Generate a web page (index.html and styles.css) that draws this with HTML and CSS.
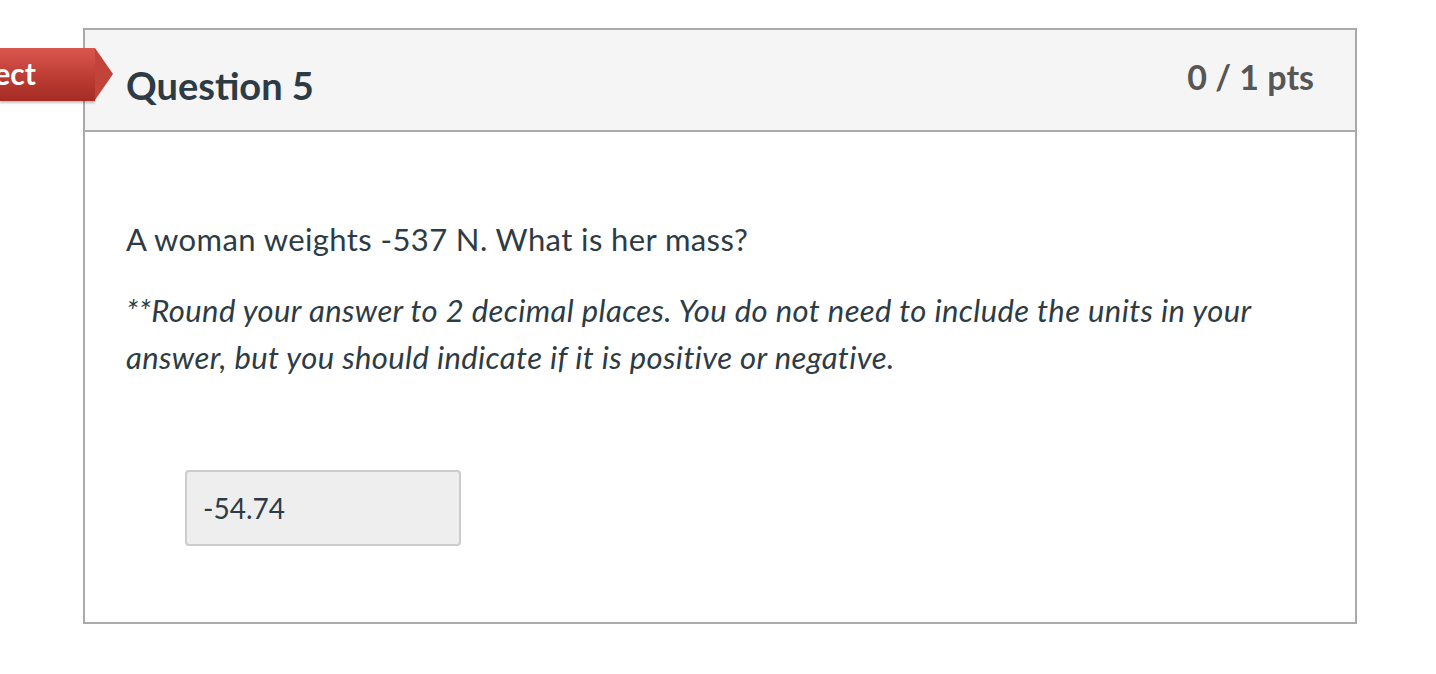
FILE: index.html
```html
<!DOCTYPE html>
<html>
<head>
<meta charset="utf-8">
<link rel="stylesheet" href="styles.css">
</head>
<body>
<div class="page">
  <div class="card">
    <div class="flag"><span class="flag-text">Incorrect</span></div>
    <div class="card-header">
      <h2 class="title">Question 5</h2>
      <div class="pts">0 / 1 pts</div>
    </div>
    <div class="card-body">
      <p class="question">A woman weights -537 N. What is her mass?</p>
      <p class="note">**Round your answer to 2 decimal places. You do not need to include the units in your answer, but you should indicate if it is positive or negative.</p>
      <div class="answer-wrap">
        <div class="answer">-54.74</div>
      </div>
    </div>
  </div>
</div>
</body>
</html>
```
FILE: styles.css
```css
html, body {
  margin: 0;
  padding: 0;
  background: #fff;
}
body {
  font-family: Lato, "Open Sans", sans-serif;
  color: #2d3b45;
}
.page {
  padding: 28px 0 0 83px;
}
.card {
  position: relative;
  width: 1270px;
  border: 2px solid #aaaaaa;
}
.card-header {
  display: flex;
  justify-content: space-between;
  align-items: flex-start;
  height: 100px;
  background: #f5f5f5;
  border-bottom: 2px solid #aaaaaa;
  padding: 0 41px 0 41px;
}
.title {
  margin: 33px 0 0 0;
  font-size: 38px;
  font-weight: 700;
  line-height: 44px;
  color: #2d3b45;
}
.pts {
  margin-top: 27px;
  font-size: 34px;
  font-weight: 700;
  line-height: 40px;
  color: #565656;
}
.flag {
  position: absolute;
  left: -85px;
  top: 18px;
  width: 95px;
  height: 53px;
  background: linear-gradient(#da5750, #b93a31 60%, #a52c24);
  box-shadow: 0 2px 2px rgba(0, 0, 0, 0.25);
}
.flag::after {
  content: "";
  position: absolute;
  right: -18px;
  top: 0;
  border-top: 26.5px solid transparent;
  border-bottom: 26.5px solid transparent;
  border-left: 18px solid #c2433a;
}
.flag-text {
  position: absolute;
  right: 59px;
  top: 10px;
  font-size: 30px;
  font-weight: 700;
  color: #fff;
  line-height: 30px;
  white-space: nowrap;
}
.card-body {
  padding: 85px 41px 76px 41px;
}
.question {
  margin: 0 0 26px 0;
  font-size: 31px;
  line-height: 44px;
  letter-spacing: 0.4px;
}
.note {
  margin: 0;
  font-size: 31px;
  font-style: italic;
  line-height: 47px;
  letter-spacing: 0.4px;
}
.answer-wrap {
  padding: 89px 0 0 59px;
}
.answer {
  box-sizing: border-box;
  width: 276px;
  height: 76px;
  background: #eeeeee;
  border: 2px solid #cccccc;
  border-radius: 4px;
  font-size: 28px;
  line-height: 72px;
  padding-left: 16px;
  color: #2d3b45;
}
```
